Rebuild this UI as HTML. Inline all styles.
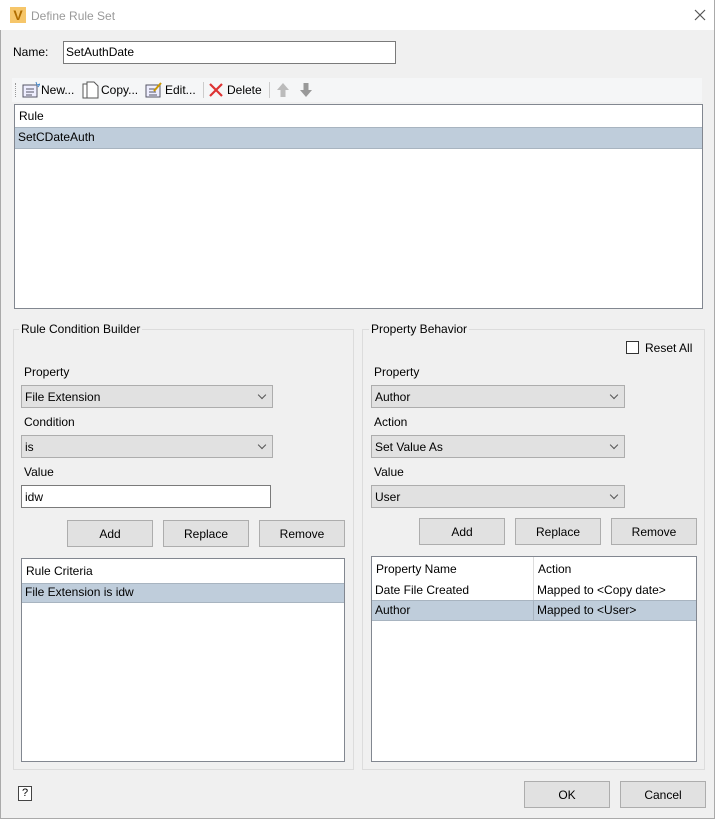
<!DOCTYPE html>
<html><head><meta charset="utf-8"><style>
*{box-sizing:border-box;margin:0;padding:0}
body{width:715px;height:819px;background:#f0f0f0;font-family:"Liberation Sans",sans-serif;font-size:12px;color:#000;position:relative;overflow:hidden}
.a{position:absolute}
.t{position:absolute;white-space:nowrap;line-height:14px}
.combo{position:absolute;background:#e1e1e1;border:1px solid #adadad;height:23px;padding:4px 0 0 3px}
.combo:after{content:"";position:absolute;right:7px;top:6px;width:5px;height:5px;border-right:1px solid #555;border-bottom:1px solid #555;transform:rotate(45deg)}
.btn{position:absolute;background:#e1e1e1;border:1px solid #adadad;height:27px;text-align:center;line-height:26px}
.box{position:absolute;background:#fff;border:1px solid #828790}
.grp{position:absolute;border:1px solid #dcdcdc}
.sel{position:absolute;background:#bfcddb;border-top:1px solid #a8b4c0;border-bottom:1px solid #a8b4c0}
</style></head><body>
<div class="a" style="left:0;top:0;width:715px;height:30px;background:#fff"></div>
<div class="a" style="left:0;top:30px;width:1px;height:789px;background:#aaa"></div>
<div class="a" style="left:714px;top:0;width:1px;height:819px;background:#aaa"></div>
<div class="a" style="left:0;top:818px;width:715px;height:1px;background:#aaa"></div>
<div class="a" style="left:10px;top:7px;width:16px;height:16px;background:#f6c66a;color:#b06d00;font-weight:bold;font-size:14px;text-align:center;line-height:16px">V</div>
<div class="t" style="left:31px;top:9px;color:#999">Define Rule Set</div>
<svg class="a" style="left:694px;top:9px" width="12" height="12"><path d="M1 1L11 11M11 1L1 11" stroke="#555" stroke-width="1.2"/></svg>

<div class="t" style="left:13px;top:45px">Name:</div>
<div class="a" style="left:63px;top:41px;width:333px;height:23px;background:#fff;border:1px solid #7a7a7a"></div>
<div class="t" style="left:66px;top:45px">SetAuthDate</div>

<div class="a" style="left:12px;top:78px;width:690px;height:24px;background:#f5f6f7"></div>
<div class="a" style="left:15px;top:83px;width:1px;height:14px;border-left:1px dotted #999"></div>
<svg class="a" style="left:22px;top:81px" width="18" height="18"><rect x="1" y="4" width="14" height="12" fill="#eef" stroke="#556"/><path d="M4 8h8M4 11h8M4 14h6" stroke="#556"/><path d="M14 1l1 3 3-1-2 3" stroke="#48c" fill="none"/></svg>
<div class="t" style="left:41px;top:83px">New...</div>
<svg class="a" style="left:82px;top:81px" width="18" height="18"><path d="M1 3h9v14H1z" fill="#fff" stroke="#555"/><path d="M5 1h7l4 4v12H5z" fill="#fff" stroke="#555"/></svg>
<div class="t" style="left:101px;top:83px">Copy...</div>
<svg class="a" style="left:145px;top:81px" width="18" height="18"><rect x="1" y="4" width="14" height="12" fill="#eef" stroke="#556"/><path d="M4 8h6M4 11h7M4 14h8" stroke="#556"/><path d="M9 10l7-8" stroke="#c90" stroke-width="2"/></svg>
<div class="t" style="left:165px;top:83px">Edit...</div>
<div class="a" style="left:203px;top:82px;width:1px;height:16px;background:#ccc"></div>
<svg class="a" style="left:208px;top:82px" width="16" height="16"><path d="M2 2L14 14M14 2L2 14" stroke="#d33" stroke-width="2.2"/></svg>
<div class="t" style="left:227px;top:83px">Delete</div>
<div class="a" style="left:269px;top:82px;width:1px;height:16px;background:#ccc"></div>
<svg class="a" style="left:276px;top:82px" width="14" height="16"><path d="M7 1L13 8H9.5V15h-5V8H1z" fill="#bbb"/></svg>
<svg class="a" style="left:299px;top:82px" width="14" height="16"><path d="M7 15L13 8H9.5V1h-5V8H1z" fill="#999"/></svg>

<div class="box" style="left:14px;top:104px;width:689px;height:205px"></div>
<div class="t" style="left:19px;top:109px">Rule</div>
<div class="sel" style="left:15px;top:127px;width:687px;height:22px"></div>
<div class="t" style="left:18px;top:130px">SetCDateAuth</div>

<div class="grp" style="left:13px;top:329px;width:341px;height:441px"></div>
<div class="t" style="left:19px;top:322px;background:#f0f0f0;padding:0 2px">Rule Condition Builder</div>
<div class="t" style="left:24px;top:365px">Property</div>
<div class="combo" style="left:21px;top:385px;width:252px">File Extension</div>
<div class="t" style="left:24px;top:415px">Condition</div>
<div class="combo" style="left:21px;top:435px;width:252px">is</div>
<div class="t" style="left:24px;top:465px">Value</div>
<div class="a" style="left:21px;top:485px;width:250px;height:23px;background:#fff;border:1px solid #7a7a7a;padding:4px 0 0 3px">idw</div>
<div class="btn" style="left:67px;top:520px;width:86px">Add</div>
<div class="btn" style="left:163px;top:520px;width:86px">Replace</div>
<div class="btn" style="left:259px;top:520px;width:86px">Remove</div>
<div class="box" style="left:21px;top:558px;width:324px;height:204px"></div>
<div class="t" style="left:26px;top:564px">Rule Criteria</div>
<div class="sel" style="left:22px;top:583px;width:322px;height:20px"></div>
<div class="t" style="left:25px;top:585px">File Extension is idw</div>

<div class="grp" style="left:362px;top:329px;width:343px;height:441px"></div>
<div class="t" style="left:369px;top:322px;background:#f0f0f0;padding:0 2px">Property Behavior</div>
<div class="a" style="left:626px;top:341px;width:13px;height:13px;background:#fff;border:1px solid #333"></div>
<div class="t" style="left:645px;top:341px">Reset All</div>
<div class="t" style="left:374px;top:365px">Property</div>
<div class="combo" style="left:371px;top:385px;width:254px">Author</div>
<div class="t" style="left:374px;top:415px">Action</div>
<div class="combo" style="left:371px;top:435px;width:254px">Set Value As</div>
<div class="t" style="left:374px;top:465px">Value</div>
<div class="combo" style="left:371px;top:485px;width:254px">User</div>
<div class="btn" style="left:419px;top:518px;width:86px">Add</div>
<div class="btn" style="left:515px;top:518px;width:86px">Replace</div>
<div class="btn" style="left:611px;top:518px;width:86px">Remove</div>
<div class="box" style="left:371px;top:556px;width:326px;height:206px"></div>
<div class="a" style="left:533px;top:557px;width:1px;height:64px;background:#ddd"></div>
<div class="t" style="left:376px;top:562px">Property Name</div>
<div class="t" style="left:538px;top:562px">Action</div>
<div class="t" style="left:375px;top:583px">Date File Created</div>
<div class="t" style="left:537px;top:583px">Mapped to &lt;Copy date&gt;</div>
<div class="sel" style="left:372px;top:600px;width:324px;height:21px"></div>
<div class="a" style="left:533px;top:600px;width:1px;height:21px;background:#a8b4c0"></div>
<div class="t" style="left:375px;top:603px">Author</div>
<div class="t" style="left:537px;top:603px">Mapped to &lt;User&gt;</div>

<div class="a" style="left:18px;top:786px;width:14px;height:15px;border:1px solid #444;background:#fff;font-size:11px;text-align:center;line-height:13px">?</div>
<div class="btn" style="left:524px;top:781px;width:86px">OK</div>
<div class="btn" style="left:620px;top:781px;width:86px">Cancel</div>
</body></html>
